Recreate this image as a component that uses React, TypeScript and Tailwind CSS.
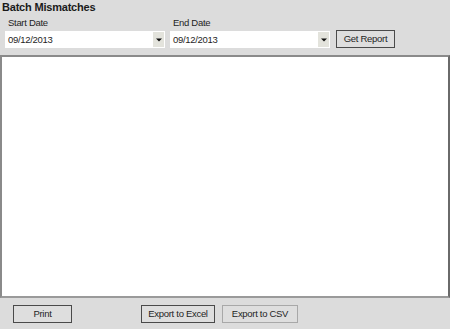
import React from "react";

function DateBox({ label, value }: { label: string; value: string }) {
  return (
    <div className="flex flex-col w-[160px]">
      <div className="pl-[3px] h-[13px] leading-[13px] text-[9.5px] tracking-[-0.3px] text-[#1e1e1e]">{label}</div>
      <div className="mt-[2px] h-[17px] bg-white flex items-center">
        <div className="flex-1 pl-[3px] text-[9.5px] tracking-[-0.3px] text-[#1e1e1e] leading-[17px]">{value}</div>
        <div className="w-[11px] h-[15px] mr-[1px] bg-[#e3e3dc] flex items-center justify-center">
          <svg width="6" height="4" viewBox="0 0 6 4">
            <path d="M0 0.5 H6 L3 3.5 Z" fill="#111" />
          </svg>
        </div>
      </div>
    </div>
  );
}

function Btn({ children, w, light }: { children: React.ReactNode; w: string; light?: boolean }) {
  return (
    <div
      className={`${w} h-[18px] flex items-center justify-center whitespace-nowrap text-[9.5px] tracking-[-0.3px] text-[#1e1e1e] bg-[#dedede] border ${
        light ? "border-[#a8a8a8]" : "border-[#4a4a4a]"
      }`}
    >
      {children}
    </div>
  );
}

export default function App() {
  return (
    <div
      className="w-[450px] h-[329px] bg-[#dcdcdc] flex flex-col overflow-hidden"
      style={{ fontFamily: '"Liberation Sans", Arial, sans-serif' }}
    >
      <div className="pl-[2px] pt-[1px] h-[15px] leading-[13px] text-[11px] tracking-[-0.2px] font-bold text-[#1a1a1a]">
        Batch Mismatches
      </div>
      <div className="flex items-end pl-[5px] mt-[1px] gap-[5px]">
        <DateBox label="Start Date" value="09/12/2013" />
        <DateBox label="End Date" value="09/12/2013" />
        <div className="ml-[1px]">
          <Btn w="w-[59px]">Get Report</Btn>
        </div>
      </div>
      <div className="mt-[7px] h-[243px] bg-white border-t-2 border-l-2 border-[#8a8a8a] border-r-2 border-b-2 border-r-[#6a6a6a] border-b-[#9a9a9a]" />
      <div className="flex mt-[7px] pl-[13px]">
        <Btn w="w-[59px]">Print</Btn>
        <div className="ml-[69px]">
          <Btn w="w-[74px]">Export to Excel</Btn>
        </div>
        <div className="ml-[7px]">
          <Btn w="w-[76px]" light>
            Export to CSV
          </Btn>
        </div>
      </div>
    </div>
  );
}
